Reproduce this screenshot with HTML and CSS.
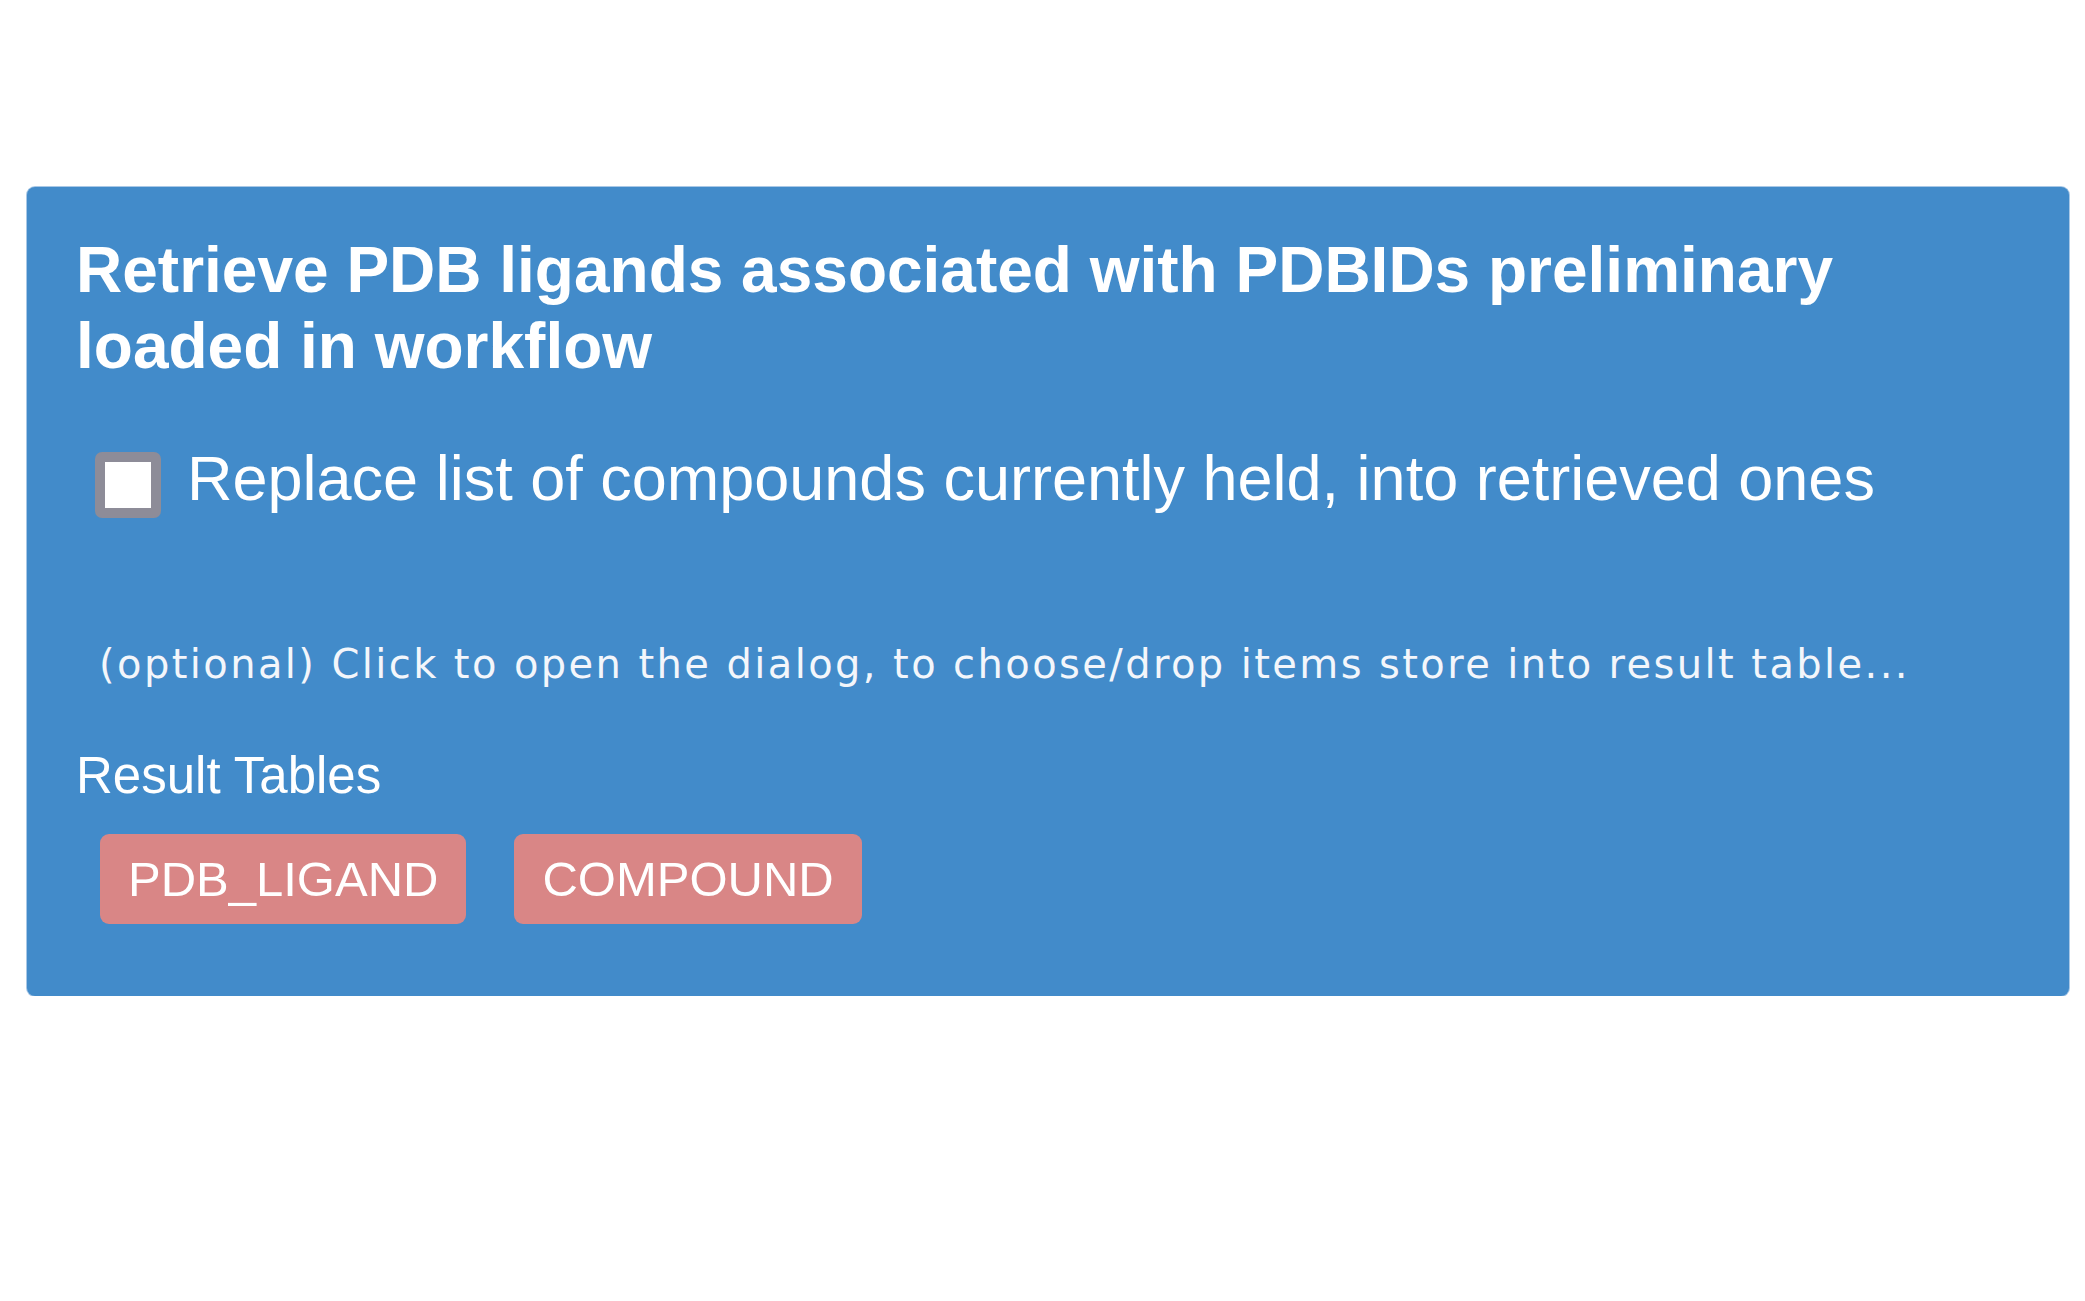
FILE: index.html
```html
<!DOCTYPE html>
<html lang="en">
<head>
    <meta charset="UTF-8">
    <title>Retrieve PDB ligands</title>
    <link rel="stylesheet" href="styles.css">
</head>
<body>
    <div class="panel">
        <h2 class="panel-title">Retrieve PDB ligands associated with PDBIDs preliminary loaded in workflow</h2>

        <label class="check-row">
            <input type="checkbox" class="check-box">
            <span class="check-label">Replace list of compounds currently held, into retrieved ones</span>
        </label>

        <div class="hint">(optional) Click to open the dialog, to choose/drop items store into result table...</div>

        <div class="section-label">Result Tables</div>
        <div class="tag-list">
            <span class="tag">PDB_LIGAND</span>
            <span class="tag">COMPOUND</span>
        </div>
    </div>
</body>
</html>
```
FILE: styles.css
```css
* {
    box-sizing: border-box;
    margin: 0;
    padding: 0;
}

body {
    background: #ffffff;
    font-family: "Liberation Sans", Arial, sans-serif;
    color: #ffffff;
}

.panel {
    margin: 187px 0 0 27px;
    width: 2042px;
    background: #428bca;
    border-radius: 8px;
    box-shadow: 0 0 0 1px #a9c8e6;
    padding: 45px 40px 72px 49px;
}

.panel-title {
    font-size: 64px;
    font-weight: bold;
    line-height: 76px;
}

.check-row {
    display: flex;
    align-items: flex-start;
    margin-top: 58px;
    margin-left: 19px;
    gap: 26px;
}

.check-box {
    appearance: none;
    -webkit-appearance: none;
    flex: none;
    width: 66px;
    height: 66px;
    margin-top: 10px;
    background: #ffffff;
    border: 10px solid #8d8c98;
    border-radius: 7px;
}

.check-label {
    font-size: 63px;
    line-height: 72px;
}

.hint {
    margin-top: 124px;
    margin-left: 23px;
    font-family: "DejaVu Sans", Verdana, sans-serif;
    font-size: 40px;
    letter-spacing: 2.4px;
    line-height: 44px;
    color: #f3f6fb;
}

.section-label {
    margin-top: 62px;
    font-size: 51px;
    line-height: 56px;
}

.tag-list {
    display: flex;
    gap: 48px;
    margin-top: 30px;
    margin-left: 24px;
}

.tag {
    display: inline-flex;
    align-items: center;
    height: 90px;
    padding: 0 28px;
    background: #d98686;
    border-radius: 9px;
    font-size: 49px;
}
```
